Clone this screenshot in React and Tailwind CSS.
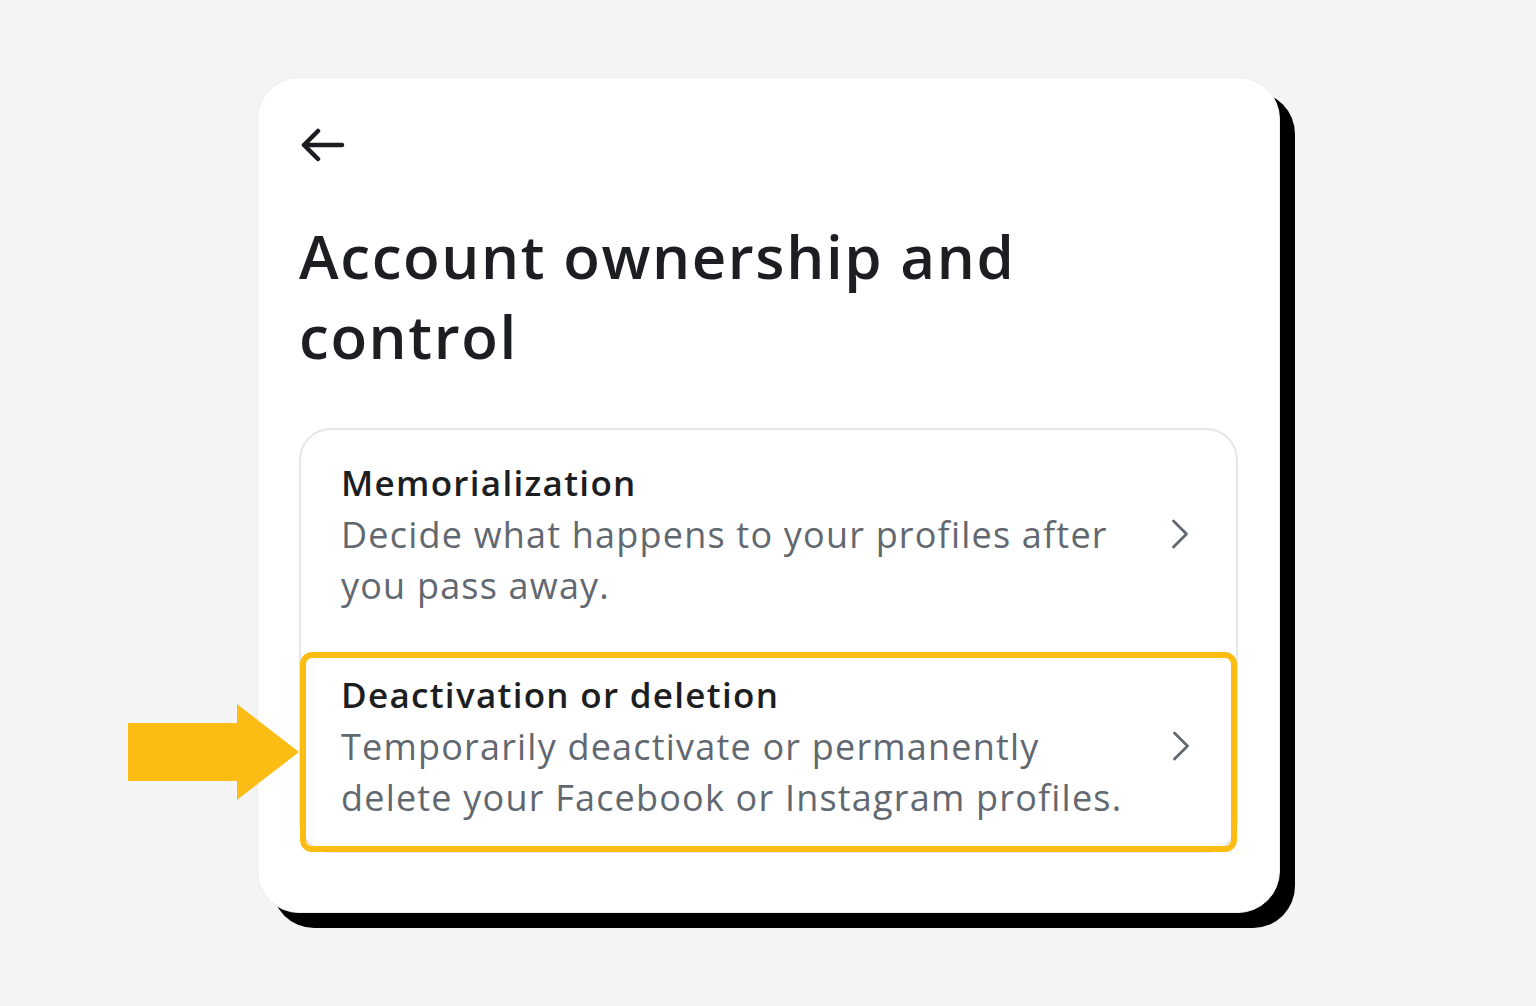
import { ChevronRight } from 'lucide-react'

const font = { fontFamily: '"Open Sans", "Noto Sans", sans-serif' }

function Row({ title, text, highlighted }) {
  return (
    <div
      className={
        highlighted
          ? 'relative flex items-center pl-[35px] pr-[24px] pt-[10px] pb-[23px] border-[6px] border-[#fbbc14] rounded-[12px] -mx-px -mb-px'
          : 'flex items-center pl-[40px] pr-[30px] pt-[26px] pb-[41px]'
      }
    >
      <div className="flex-1">
        <div className="text-[35px] leading-[53px] font-semibold text-[#1c1e21] tracking-[1.3px]">{title}</div>
        <div className="text-[36px] leading-[51px] text-[#626870] tracking-[1.2px]">{text}</div>
      </div>
      <ChevronRight className="w-[52px] h-[52px] text-[#626870] ml-[20px]" strokeWidth={1.3} />
    </div>
  )
}

export default function App() {
  return (
    <div className="min-h-screen h-[1006px] bg-[#f4f4f4] pt-[77px] pl-[257px]" style={font}>
      <div className="relative w-[1023px] h-[836px] bg-white rounded-[42px] border border-[#ececec] shadow-[15px_15px_0_0_#000] px-[41px] pt-[50px]">
        <svg width="46" height="34" viewBox="0 0 46 34" className="ml-[1px]">
          <path d="M42 17H4M18 3L4 17l14 14" fill="none" stroke="#1c1e21" strokeWidth="4.5" strokeLinecap="round" strokeLinejoin="round" />
        </svg>

        <h1 className="mt-[54px] text-[60px] leading-[80px] font-semibold text-[#1c1e21] tracking-[1.6px] w-[800px]">
          Account ownership and control
        </h1>

        <div className="mt-[52px] border-2 border-[#e4e6eb] rounded-[32px]">
          <Row
            title="Memorialization"
            text="Decide what happens to your profiles after you pass away."
          />
          <Row
            highlighted
            title="Deactivation or deletion"
            text="Temporarily deactivate or permanently delete your Facebook or Instagram profiles."
          />
        </div>

        <svg width="172" height="98" viewBox="0 0 172 98" className="absolute left-[-130px] top-[626px]">
          <path d="M0 19H109V0L171 48L109 96V77H0Z" fill="#fbbc14" />
        </svg>
      </div>
    </div>
  )
}
